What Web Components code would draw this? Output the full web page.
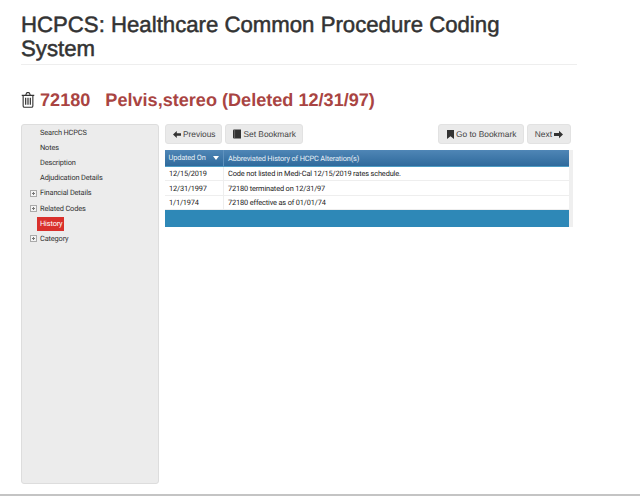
<!DOCTYPE html>
<html><head><meta charset="utf-8"><style>
html,body{margin:0;padding:0;background:#fff}
body{font-family:"Liberation Sans",Arial,sans-serif;color:#333;height:503px;overflow:hidden;text-rendering:geometricPrecision}
</style></head><body>
<template id="t-page"><style>
:host{display:block;height:503px;box-sizing:border-box;position:relative}
.wrap{padding:13px 63px 0 21px;height:494px;box-sizing:border-box}
.head{border-bottom:1px solid #eee;height:51px}
.sub{margin-top:25px;height:20px}
.cols{display:flex;gap:6px;margin-top:14px;width:552px}
.foot{height:2px;background:#c4c4c4}
</style><div class="wrap"><div class="head"><slot name="title"></slot></div><div class="sub"><slot name="sub"></slot></div><div class="cols"><slot name="side"></slot><slot name="main"></slot></div></div><div class="foot"></div></template>

<template id="t-title"><style>
:host{display:block;font-size:22.2px;line-height:23.6px;font-weight:500;color:#333;-webkit-text-stroke:.5px #333}
</style><slot></slot></template>

<template id="t-sub"><style>
:host{display:flex;align-items:center;font-size:18.1px;line-height:20px;font-weight:700;color:#a94442;white-space:pre}
svg{width:14px;height:16px;margin-right:5px;flex:none}
.n{margin-right:15px}
</style><svg viewBox="0 0 15 17" fill="none" stroke="#333" stroke-width="1.2"><path d="M.8 3.6h13.4M2.3 3.6v11.2q0 1.4 1.4 1.4h7.6q1.4 0 1.4-1.4V3.6M5 3.4l.8-2q.3-.8 1-.8h1.4q.7 0 1 .8l.8 2"/><path stroke-width="1.3" d="M5 6v7.6M7.5 6v7.6M10 6v7.6"/></svg><span class="n"><slot name="code"></slot></span><slot></slot></template>

<template id="t-side"><style>
:host{display:block;box-sizing:border-box;width:138px;height:360px;background:#ececec;border:1px solid #ddd;border-radius:3px;padding:.5px 0 0}
</style><slot></slot></template>

<template id="t-item"><style>
:host{display:flex;align-items:center;height:15.1px;font-family:Roboto,sans-serif;font-size:7.4px;letter-spacing:-.15px;color:#333;padding-left:8px}
.box{width:5px;height:5px;border:1px solid #aaa;position:relative;margin-right:1px;flex:none;background:#f4f4f4}
.box::before{content:"";position:absolute;left:1px;right:1px;top:2px;height:1px;background:#777}
.box::after{content:"";position:absolute;top:1px;bottom:1px;left:2px;width:1px;background:#777}
.sp{width:8px;flex:none}
.lab{padding:0 2px;line-height:14px}
:host([active]) .lab{background:#d9302c;color:#fff;padding:0 2px 0 3px;margin-left:-1px}
:host([plain]) .box{display:none}
:host(:not([plain])) .sp{display:none}
</style><span class="box"></span><span class="sp"></span><span class="lab"><slot></slot></span></template>

<template id="t-main"><style>
:host{display:block;width:408px}
.bar{display:flex;gap:3px;height:20px;margin-bottom:6px;width:406px}
.fill{flex:1}
</style><div class="bar"><slot name="left"></slot><div class="fill"></div><slot name="right"></slot></div><slot></slot></template>

<template id="t-btn"><style>
:host{display:inline-flex;align-items:center;box-sizing:border-box;height:20px;padding:0 var(--pr,7px) 0 var(--pl,7px);background:#eaeaea;border:1px solid #e2e2e2;border-radius:3px;font-size:8.35px;color:#444;white-space:nowrap;gap:2px}
</style><slot name="i1"></slot><slot></slot><slot name="i2"></slot></template>

<template id="t-grid"><style>
:host{display:block;width:408px;box-sizing:border-box;border-right:4px solid #efefef;height:77px;font-family:Roboto,sans-serif;font-size:7.4px;letter-spacing:-.15px;color:#333}
.h{display:flex;height:16px;background:linear-gradient(#4f86b6,#2f6a9c);color:#e8f0f6;align-items:center;border-bottom:1px solid #4e9cc4}
.c1{width:59px;flex:none;padding-left:3.5px;box-sizing:border-box;position:relative}
.c2{padding-left:4px;flex:1}
.h .c1{border-right:1px solid #5f92be;height:16px;line-height:16px}
.arrow{position:absolute;right:4px;top:6px;width:0;height:0;border:3px solid transparent;border-top:4px solid #fff;border-bottom:0}
.foot{height:16.5px;background:#2e88b7}
</style><div class="h"><div class="c1">Updated On<span class="arrow"></span></div><div class="c2">Abbreviated History of HCPC Alteration(s)</div></div><slot></slot><div class="foot"></div></template>

<template id="t-row"><style>
:host{display:flex;height:13.4px;align-items:center;background:#fff;border-bottom:1px solid #eee;color:#222}
.c1{width:59px;flex:none;padding-left:4px;box-sizing:border-box;border-right:1px solid #eee;height:100%;display:flex;align-items:center}
.c2{padding-left:4px}
</style><div class="c1"><slot name="d"></slot></div><div class="c2"><slot></slot></div></template>

<script>
for (const [n,t] of [['hc-page','t-page'],['hc-title','t-title'],['hc-sub','t-sub'],['hc-side','t-side'],['hc-item','t-item'],['hc-main','t-main'],['hc-btn','t-btn'],['hc-grid','t-grid'],['hc-row','t-row']]) {
  customElements.define(n, class extends HTMLElement {
    constructor(){super();this.attachShadow({mode:'open'}).appendChild(document.getElementById(t).content.cloneNode(true));}
  });
}
</script>

<hc-page>
<hc-title slot="title">HCPCS: Healthcare Common Procedure Coding System</hc-title>
<hc-sub slot="sub"><span slot="code">72180</span>Pelvis,stereo (Deleted 12/31/97)</hc-sub>
<hc-side slot="side">
<hc-item plain>Search HCPCS</hc-item>
<hc-item plain>Notes</hc-item>
<hc-item plain>Description</hc-item>
<hc-item plain>Adjudication Details</hc-item>
<hc-item>Financial Details</hc-item>
<hc-item>Related Codes</hc-item>
<hc-item plain active>History</hc-item>
<hc-item>Category</hc-item>
</hc-side>
<hc-main slot="main">
<hc-btn slot="left" style="--pl:6.5px;--pr:6px"><svg slot="i1" width="8.5" height="9" viewBox="0 0 9 9" fill="#333"><path d="M0 4.5 4 .8v2.3h5v2.8H4v2.3z"/></svg>Previous</hc-btn>
<hc-btn slot="left" style="--pl:7px;--pr:6px"><svg slot="i1" width="8" height="10" viewBox="0 0 8 10" fill="#333"><path d="M1 .5h7v9H1q-1 0-1-1v-7q0-1 1-1z"/><path d="M1.6 1v8" stroke="#999" stroke-width=".5"/></svg>Set Bookmark</hc-btn>
<hc-btn slot="right" style="--pl:8px;--pr:6.5px"><svg slot="i1" width="7" height="9" viewBox="0 0 7 9" fill="#333"><path d="M0 0h7v9L3.5 6.3 0 9z"/></svg>Go to Bookmark</hc-btn>
<hc-btn slot="right"><span>Next</span><svg slot="i2" width="9" height="9" viewBox="0 0 9 9" fill="#333"><path d="M9 4.5 5 .8v2.3H0v2.8h5v2.3z"/></svg></hc-btn>
<hc-grid>
<hc-row><span slot="d">12/15/2019</span>Code not listed in Medi-Cal 12/15/2019 rates schedule.</hc-row>
<hc-row><span slot="d">12/31/1997</span>72180 terminated on 12/31/97</hc-row>
<hc-row><span slot="d">1/1/1974</span>72180 effective as of 01/01/74</hc-row>
</hc-grid>
</hc-main>
</hc-page>
</body></html>
